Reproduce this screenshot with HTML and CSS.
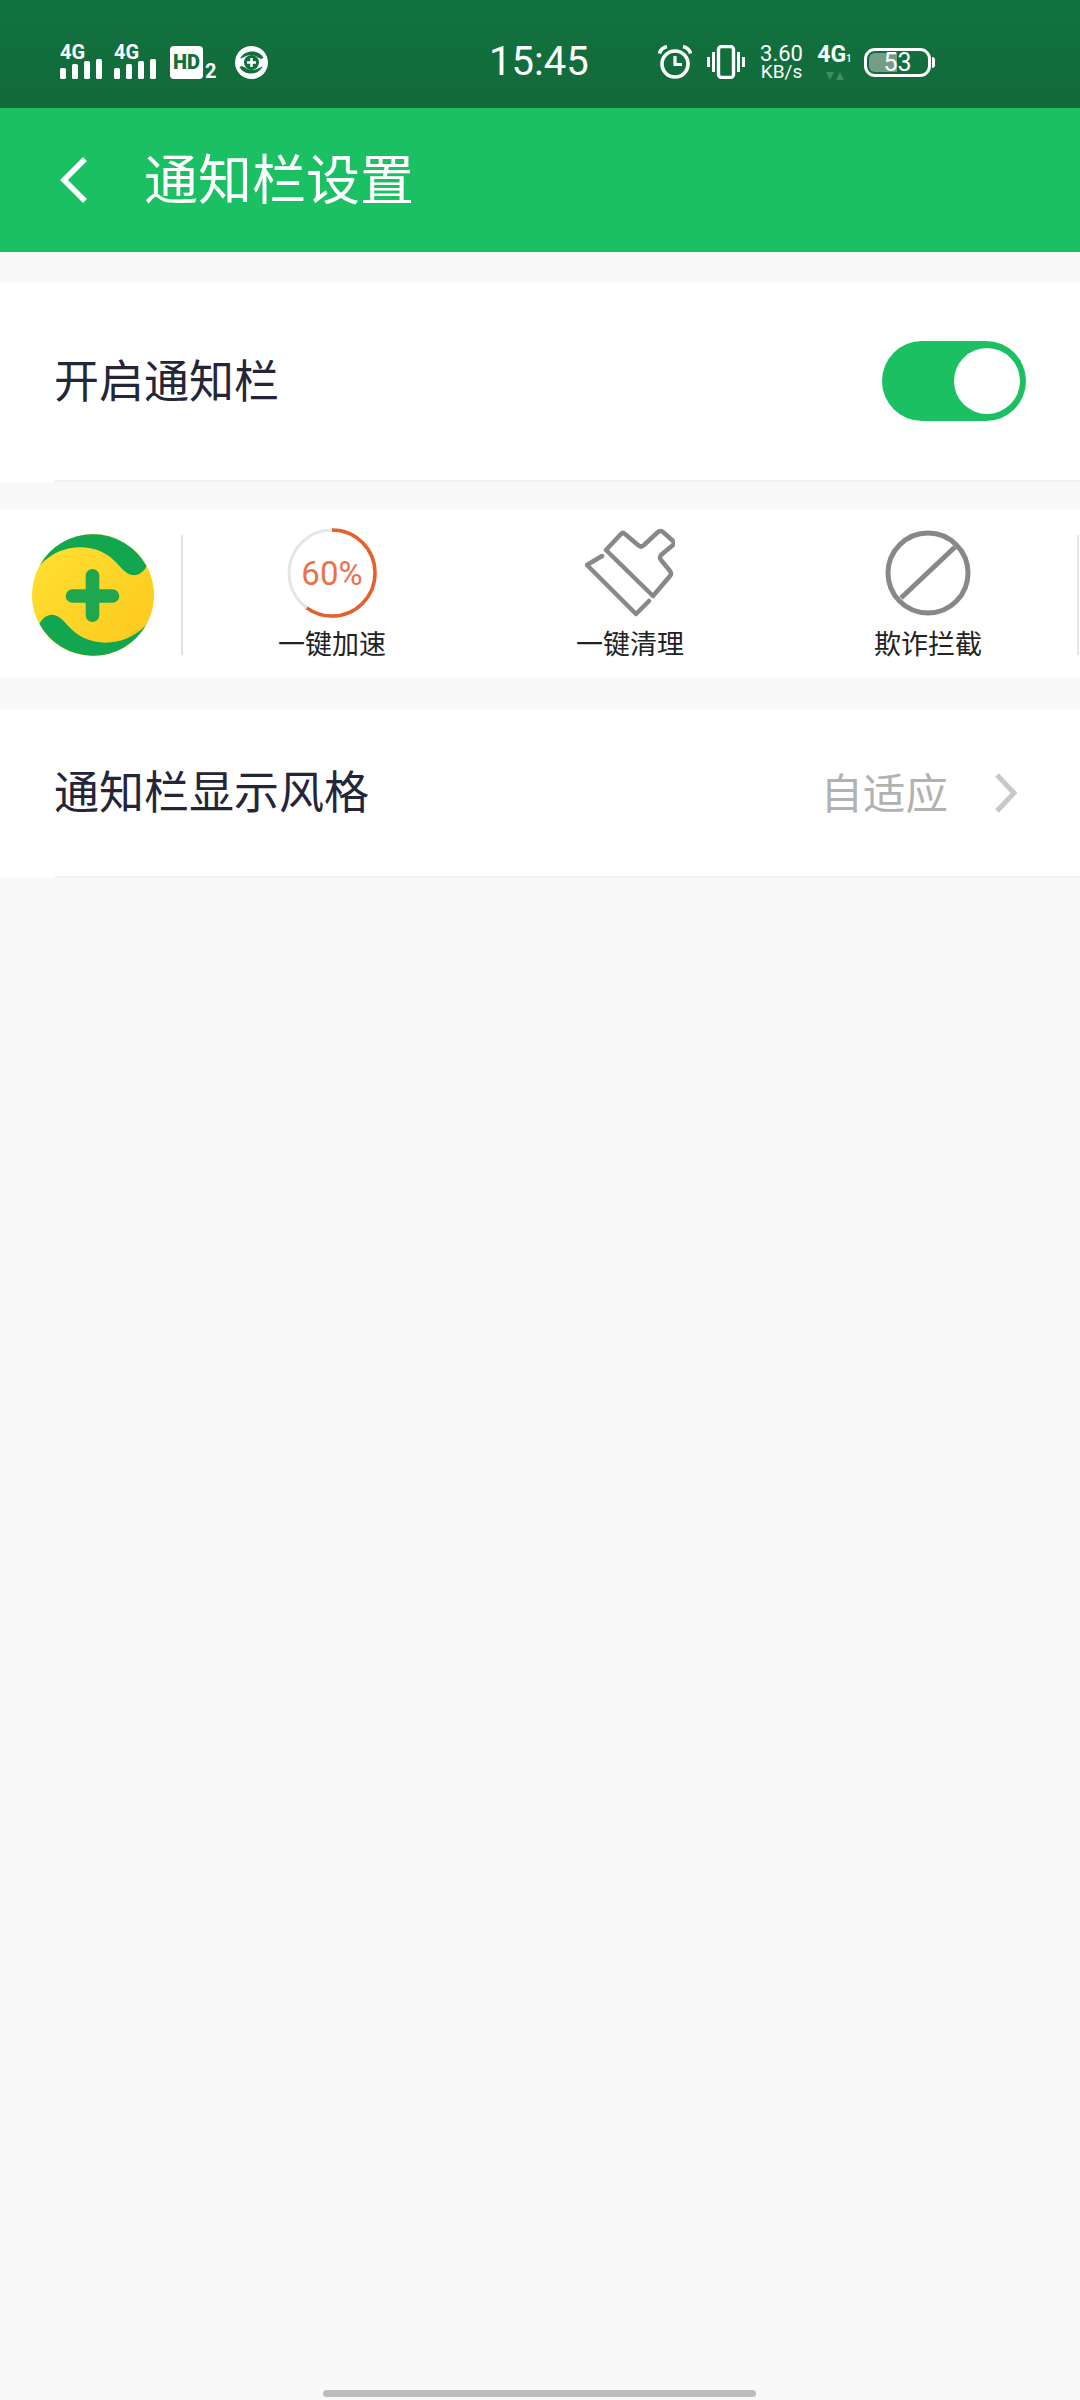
FILE: index.html
```html
<!DOCTYPE html>
<html>
  <head>
    <title>通知栏设置</title>
    <link rel="stylesheet" href="styles.css">
  </head>
  <body>
    <div class="status-bar">
      <div class="status-left">
        <div class="signal">
          <span class="signal-label">4G</span>
          <svg width="42" height="20" viewBox="0 0 42 20" fill="#fff"><rect x="0" y="9" width="6" height="11" rx="1.5"/><rect x="12" y="5" width="6" height="15" rx="1.5"/><rect x="24" y="2" width="6" height="18" rx="1.5"/><rect x="36" y="0" width="6" height="20" rx="1.5"/></svg>
        </div>
        <div class="signal">
          <span class="signal-label">4G</span>
          <svg width="42" height="20" viewBox="0 0 42 20" fill="#fff"><rect x="0" y="9" width="6" height="11" rx="1.5"/><rect x="12" y="5" width="6" height="15" rx="1.5"/><rect x="24" y="2" width="6" height="18" rx="1.5"/><rect x="36" y="0" width="6" height="20" rx="1.5"/></svg>
        </div>
        <div class="hd">
          <span class="hd-box">HD</span>
          <span class="hd-sub">2</span>
        </div>
        <svg class="app-badge" width="33" height="33" viewBox="0 0 33 33">
          <circle cx="16.5" cy="16.5" r="16.5" fill="#fff"/>
          <path d="M5 12.500C8 7.500 12 5.500 17 5.500c5 0 9 2 11.500 6.500-2 1.500-4 .5-5.500-.5-2-1.500-4-2.500-7-2.500-4 0-6 2-10.500 3.500z" fill="#11703d"/>
          <path d="M28 20.500c-3 5-7 7-12 7-5 0-9-2-11.500-6.500 2-1.500 4-.5 5.500.5 2 1.500 4 2.500 7 2.500 4 0 6-2 11-3.500z" fill="#11703d"/>
          <circle cx="16.500" cy="16.500" r="7.500" fill="#11703d"/>
          <path d="M15.200 12h2.600v3.200H21v2.600h-3.200V21h-2.600v-3.200H12v-2.600h3.200z" fill="#fff"/>
        </svg>
      </div>
      <div class="status-time">15:45</div>
      <div class="status-right">
        <svg width="34" height="34" viewBox="0 0 34 34" fill="none" stroke="#fff">
          <circle cx="17" cy="19" r="13" stroke-width="3.600"/>
          <path d="M17 11v8.500h7" stroke-width="3.200"/>
          <path d="M1.500 8.500C2.500 4.500 5 2.500 9 1.500M32.500 8.500C31.500 4.500 29 2.500 25 1.500" stroke-width="3.600"/>
        </svg>
        <svg width="38" height="34" viewBox="0 0 38 34" fill="none" stroke="#fff">
          <rect x="11.500" y="1.500" width="15" height="31" rx="3" stroke-width="3.400"/>
          <path d="M1.500 12v10M6.500 7v20M31.500 7v20M36.500 12v10" stroke-width="3"/>
        </svg>
        <div class="net-speed">
          <span class="net-speed-value">3.60</span>
          <span class="net-speed-unit">KB/s</span>
        </div>
        <div class="net-type">
          <div class="net-type-label">4G<span class="net-type-sim">1</span></div>
          <svg width="18" height="8" viewBox="0 0 18 8" fill="#3f8d62"><path d="M0 0h8L4 8zM10 8h8l-4-8z"/></svg>
        </div>
        <div class="battery">
          <div class="battery-body">53</div>
          <span class="battery-nub"></span>
        </div>
      </div>
    </div>

    <div class="title-bar">
      <svg class="back-icon" width="28" height="48" viewBox="0 0 28 48" fill="none" stroke="#fff" stroke-width="5.500"><path d="M25 3L4 24l21 21"/></svg>
      <div class="page-title">通知栏设置</div>
    </div>

    <div class="setting-row row-switch">
      <div class="setting-inner">
        <div class="setting-label">开启通知栏</div>
        <div class="switch"><span class="switch-thumb"></span></div>
      </div>
    </div>

    <div class="shortcut-card">
      <div class="logo-cell">
        <svg width="122" height="122" viewBox="0 0 122 122">
          <defs>
            <linearGradient id="logo-yellow" x1="0" y1="0" x2="1" y2="1">
              <stop offset="0" stop-color="#ffe233"/>
              <stop offset="1" stop-color="#fdc61c"/>
            </linearGradient>
          </defs>
          <circle cx="61" cy="61" r="61" fill="url(#logo-yellow)"/>
          <path d="M8 31A61 61 0 0 1 114.500 32C112 38 106 42 100 41 90 39 85 25 70 18 50 9 25 13 8 31z" fill="#12a650"/>
          <path d="M8 31A61 61 0 0 1 114.500 32C112 38 106 42 100 41 90 39 85 25 70 18 50 9 25 13 8 31z" fill="#12a650" transform="rotate(180 61 61)"/>
          <path d="M60.500 35c3.700 0 6.800 3 6.800 6.700v13.500h13.200a6.800 6.800 0 0 1 0 13.600H67.300v12.500a6.800 6.800 0 0 1-13.600 0V68.800H40.500a6.800 6.800 0 0 1 0-13.600h13.200V41.700c0-3.700 3.100-6.700 6.800-6.700z" fill="#1fa64f"/>
        </svg>
      </div>
      <div class="shortcut-list">
        <div class="shortcut">
          <svg width="90" height="90" viewBox="0 0 90 90" fill="none">
            <circle cx="45" cy="45" r="43" stroke="#e6e6e6" stroke-width="3"/>
            <circle cx="45" cy="45" r="43" stroke="#e4602c" stroke-width="3.500" pathLength="100" stroke-dasharray="60 40" transform="rotate(-90 45 45)"/>
            <text class="speed-text" x="45" y="57" text-anchor="middle">60%</text>
          </svg>
          <div class="shortcut-label">一键加速</div>
        </div>
        <div class="shortcut">
          <svg width="90" height="90" viewBox="0 0 90 90" fill="none" stroke="#888" stroke-width="4.500" stroke-linejoin="round" stroke-linecap="round">
            <path d="M21 22L36 6q2-2 4 0l13 11q3 3 6 0L73 4q3-2 5 0l10 9q2 2 0 4L76 27q-2 3 0 5l9 11q2 3 0 5L68 68z"/>
            <path d="M17 28L2 37l49 49 13-13"/>
          </svg>
          <div class="shortcut-label">一键清理</div>
        </div>
        <div class="shortcut">
          <svg width="90" height="90" viewBox="0 0 90 90" fill="none" stroke="#888" stroke-width="5">
            <circle cx="45" cy="45" r="40"/>
            <path d="M72 19L18 70"/>
          </svg>
          <div class="shortcut-label">欺诈拦截</div>
        </div>
      </div>
      <div class="card-edge"></div>
    </div>

    <div class="setting-row row-style">
      <div class="setting-inner">
        <div class="setting-label">通知栏显示风格</div>
        <div class="setting-value">
          <span class="setting-value-text">自适应</span>
          <svg width="24" height="40" viewBox="0 0 24 40" fill="none" stroke="#c8c8c8" stroke-width="5"><path d="M3 2l17 18L3 38"/></svg>
        </div>
      </div>
    </div>

    <div class="home-bar"></div>
  </body>
</html>
```

FILE: styles.css
```css
/* Colours used across the page */
:root {
  --green: #1bc063;
  --green-dark: #11703d;
  --bg-page: #f9f9f9;
  --text-main: #25253a;
  --text-muted: #b2b2b2;
  --line: #f1f1f1;
}

body {
  margin: 0;
  width: 1080px;
  height: 2400px;
  overflow: hidden;
  display: flex;
  flex-direction: column;
  background: var(--bg-page);
  font-family: "Noto Sans CJK SC", "Noto Sans", sans-serif;
  color: var(--text-main);
}

/* Status bar */
.status-bar {
  height: 108px;
  box-sizing: border-box;
  padding: 16px 0 0 60px;
  display: flex;
  align-items: center;
  flex-shrink: 0;
  background: linear-gradient(to bottom, #10743f, #13693a);
  color: #fff;
  font-family: Roboto, sans-serif;
}

.status-left {
  width: 429px;
  display: flex;
  align-items: center;
}

.signal {
  width: 42px;
  margin-right: 12px;
  display: flex;
  flex-direction: column;
}

.signal svg {
  display: block;
}

.signal-label {
  font-size: 20px;
  font-weight: 700;
  line-height: 14px;
}

.hd {
  display: flex;
  align-items: flex-end;
  margin-left: 2px;
  margin-right: 19px;
}

.hd-box {
  width: 33px;
  height: 33px;
  border-radius: 4px;
  background: #fff;
  color: var(--green-dark);
  font-size: 20px;
  font-weight: 900;
  line-height: 33px;
  text-align: center;
}

.hd-sub {
  margin-left: 2px;
  font-size: 20px;
  font-weight: 700;
  line-height: 15px;
}

.status-time {
  width: 169px;
  font-size: 40px;
  line-height: 48px;
}

.status-right {
  display: flex;
  align-items: center;
}

.status-right > svg {
  margin-right: 15px;
}

.net-speed {
  width: 43px;
  margin-right: 15px;
  display: flex;
  flex-direction: column;
  align-items: center;
}

.net-speed-value {
  font-size: 22px;
  line-height: 20px;
}

.net-speed-unit {
  font-size: 19px;
  line-height: 16px;
}

.net-type {
  width: 33px;
  margin-right: 13px;
  display: flex;
  flex-direction: column;
  align-items: center;
}

.net-type-label {
  font-size: 23px;
  font-weight: 700;
  line-height: 22px;
  white-space: nowrap;
}

.net-type-sim {
  font-size: 10px;
  font-weight: 500;
}

.net-type svg {
  margin-top: 2px;
}

.battery {
  display: flex;
  align-items: center;
}

.battery-body {
  width: 67px;
  height: 29px;
  box-sizing: border-box;
  padding: 2px;
  border: 3px solid #fff;
  border-radius: 11px;
  background: linear-gradient(to right, #739d86 50%, transparent 50%) content-box;
  font-size: 25px;
  line-height: 19px;
  text-align: center;
}

.battery-nub {
  width: 3px;
  height: 11px;
  margin-left: 1px;
  border-radius: 0 3px 3px 0;
  background: #fff;
}

/* Title bar */
.title-bar {
  height: 144px;
  box-sizing: border-box;
  padding-left: 60px;
  display: flex;
  align-items: center;
  flex-shrink: 0;
  background: var(--green);
}

.back-icon {
  margin-right: 56px;
}

.page-title {
  margin-bottom: 6px;
  font-size: 54px;
  color: #fff;
  line-height: 60px;
}

/* Setting rows */
.setting-row {
  padding-left: 55px;
  background: #fff;
  flex-shrink: 0;
}

.row-switch {
  margin-top: 31px;
}

.row-style {
  margin-top: 31px;
}

.setting-inner {
  box-sizing: border-box;
  display: flex;
  align-items: center;
  justify-content: space-between;
  border-bottom: 2px solid var(--line);
}

.row-switch .setting-inner {
  height: 199px;
  padding-right: 54px;
}

.row-style .setting-inner {
  height: 169px;
  padding-right: 62px;
}

.setting-label {
  margin: 0 0 5px -1px;
  font-size: 45px;
  line-height: 60px;
}

.setting-value {
  display: flex;
  align-items: center;
  font-size: 42.500px;
  color: var(--text-muted);
}

.setting-value-text {
  margin-bottom: 5px;
}

.setting-value svg {
  margin-left: 46px;
}

.switch {
  width: 144px;
  height: 80px;
  box-sizing: border-box;
  padding: 7px 6px;
  margin-bottom: 1px;
  display: flex;
  justify-content: flex-end;
  border-radius: 40px;
  background: var(--green);
}

.switch-thumb {
  width: 66px;
  height: 66px;
  border-radius: 50%;
  background: #fff;
}

/* Notification preview card */
.shortcut-card {
  height: 169px;
  box-sizing: border-box;
  margin-top: 27px;
  padding-top: 2px;
  display: flex;
  align-items: center;
  flex-shrink: 0;
  background: #fff;
}

.logo-cell {
  width: 183px;
  height: 120px;
  box-sizing: border-box;
  padding-left: 32px;
  display: flex;
  align-items: center;
  border-right: 2px solid #e2e2e2;
}

.shortcut-list {
  display: flex;
}

.shortcut {
  width: 298px;
  display: flex;
  flex-direction: column;
  align-items: center;
}

.shortcut svg {
  display: block;
}

.shortcut-label {
  margin-top: 7px;
  font-size: 27px;
  line-height: 36px;
  color: #222;
}

.speed-text {
  font-family: Roboto, sans-serif;
  font-size: 33px;
  fill: #e9714a;
}

.card-edge {
  width: 2px;
  height: 120px;
  background: #e6e6e6;
}

/* Gesture bar */
.home-bar {
  width: 433px;
  height: 7px;
  margin: auto 0 3px 323px;
  border-radius: 4px;
  background: #bdbdbd;
}
```
